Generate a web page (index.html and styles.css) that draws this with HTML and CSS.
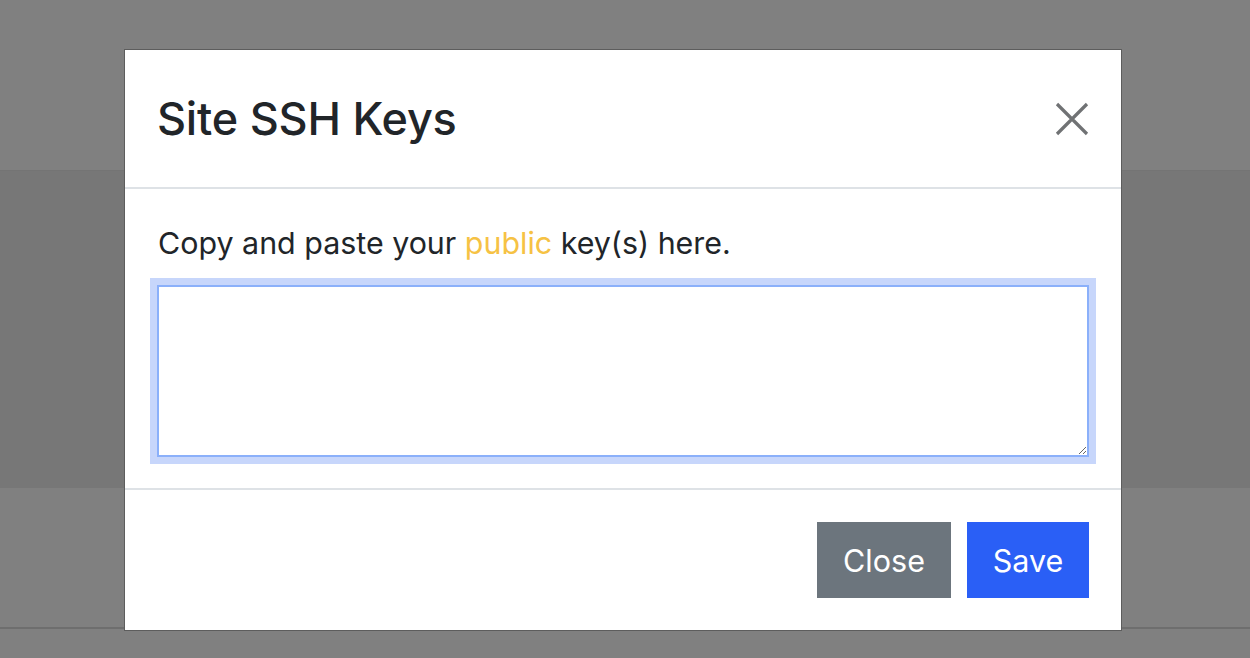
FILE: index.html
```html
<!DOCTYPE html>
<html lang="en">
<head>
<meta charset="utf-8">
<title>Site SSH Keys</title>
<link rel="stylesheet" href="styles.css">
</head>
<body>
<div class="page">
  <div class="page-top"></div>
  <div class="page-band"></div>
  <div class="page-foot"></div>
  <div class="page-rest"></div>
</div>
<div class="overlay">
  <div class="modal">
    <div class="modal-header">
      <h5 class="modal-title">Site SSH Keys</h5>
      <button class="btn-close" type="button" aria-label="Close">
        <svg width="34" height="34" viewBox="0 0 34 34"><path d="M2 2 L32 32 M32 2 L2 32" stroke="#707274" stroke-width="3.2" fill="none"/></svg>
      </button>
    </div>
    <div class="modal-body">
      <p class="hint">Copy and paste your <span class="accent">public</span> key(s) here.</p>
      <textarea class="keys"></textarea>
    </div>
    <div class="modal-footer">
      <button class="btn btn-secondary" type="button">Close</button>
      <button class="btn btn-primary" type="button">Save</button>
    </div>
  </div>
</div>
</body>
</html>
```

FILE: styles.css
```css
* { box-sizing: border-box; }
html, body { margin: 0; padding: 0; }
body {
  background: #808080;
  font-family: Inter, "Liberation Sans", Arial, sans-serif;
  color: #212529;
  width: 1250px;
  height: 658px;
  overflow: hidden;
}
.page { display: flex; flex-direction: column; }
.page-top { height: 171px; background: #808080; border-bottom: 1px solid #747474; }
.page-band { height: 317px; background: #777777; }
.page-foot { height: 141px; background: #808080; border-bottom: 2px solid #6e6e6e; }
.page-rest { height: 27px; background: #808080; }

.overlay {
  position: fixed;
  inset: 0;
  display: flex;
  align-items: flex-start;
}
.modal {
  margin: 49px 0 0 124px;
  width: 998px;
  height: 582px;
  background: #fff;
  border: 1px solid #5d5d5d;
  display: flex;
  flex-direction: column;
}
.modal-header {
  height: 139px;
  padding: 32px 32px 32px 32px;
  display: flex;
  align-items: center;
  justify-content: space-between;
  border-bottom: 2px solid #dee2e6;
}
.modal-title {
  margin: 0;
  font-size: 45px;
  font-weight: 500;
  line-height: 72px;
  color: #212529;
  letter-spacing: -0.2px;
}
.btn-close {
  border: 0;
  background: transparent;
  padding: 0;
  width: 34px;
  height: 34px;
  display: flex;
}
.modal-body {
  height: 301px;
  padding: 32px 32px 0 32px;
  border-bottom: 2px solid #dee2e6;
}
.hint {
  margin: 0 0 20px 1px;
  font-size: 30.4px;
  line-height: 44px;
  color: #212529;
}
.accent { color: #f6c244; }
.keys {
  display: block;
  width: 932px;
  height: 172px;
  border: 2px solid #8bb0fa;
  box-shadow: 0 0 0 7px #c7d6fb;
  outline: none;
  resize: both;
  font-family: Inter, "Liberation Sans", Arial, sans-serif;
  font-size: 28px;
  background: #fff;
}
.modal-footer {
  flex: 1;
  padding: 32px;
  display: flex;
  justify-content: flex-end;
  align-items: flex-start;
  gap: 16px;
}
.btn {
  height: 76px;
  border: 0;
  border-radius: 0;
  font-family: Inter, "Liberation Sans", Arial, sans-serif;
  font-size: 30.5px;
  color: #fff;
  padding: 0;
}
.btn-secondary { background: #6c757d; width: 134px; }
.btn-primary { background: #2a5ff6; width: 122px; }
```
